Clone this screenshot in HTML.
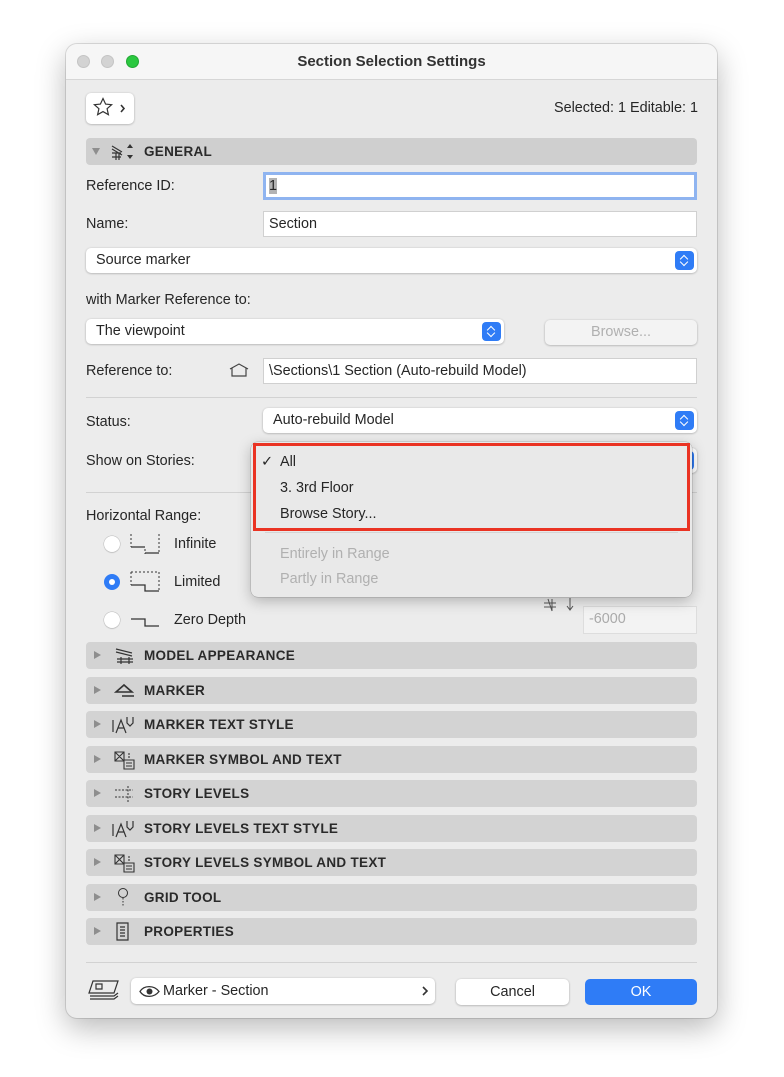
<!DOCTYPE html>
<html><head><meta charset="utf-8"><style>
*{box-sizing:border-box;margin:0;padding:0}
body{width:784px;height:1077px;background:#fff;font-family:"Liberation Sans",sans-serif;font-size:14.4px;color:#262626;position:relative;overflow:hidden}
.a{position:absolute}
.win{left:66px;top:44px;width:651px;height:974px;background:#ececec;border-radius:11px;box-shadow:0 10px 30px rgba(0,0,0,.28),0 0 0 1px rgba(0,0,0,.12);overflow:hidden}
.tb{left:0;top:0;width:651px;height:36px;background:#f6f6f6;border-bottom:1px solid #d6d6d6;text-align:center;line-height:35px;font-weight:bold;font-size:15px;color:#333}
.dot{width:13px;height:13px;border-radius:50%;top:11px;background:#d3d3d3;border:1px solid #c4c4c4}
.lbl{line-height:16px}
.fld{background:#fff;border:1px solid #d0d0d0;height:26px;line-height:24px;padding-left:5px}
.pop{background:#fff;border-radius:5px;box-shadow:0 0.5px 2px rgba(0,0,0,.3);height:25px;line-height:25px;padding-left:10px}
.stp{position:absolute;right:3px;top:3px;width:19px;height:19px;border-radius:4px;background:#2f7cf6}
.stp:before,.stp:after{content:"";position:absolute;left:6px;width:5px;height:5px;border-left:1.5px solid #fff;border-top:1.5px solid #fff}
.stp:before{top:5px;transform:rotate(45deg)}
.stp:after{top:8px;transform:rotate(225deg)}
.sec{left:20px;width:611px;height:27px;background:#d3d3d3;border-radius:4px;font-weight:bold;font-size:13.5px;letter-spacing:.3px;line-height:27px;padding-left:58px;color:#2a2a2a}
.sec:before{content:"";position:absolute;left:8px;top:9px;border-left:7px solid #8e8e8e;border-top:4.5px solid transparent;border-bottom:4.5px solid transparent}
.sec.g:before{display:none}
.ic{position:absolute;left:27px;top:5px}
.sep{left:20px;width:611px;height:1px;background:#d2d2d2}
.rad{width:16px;height:16px;border-radius:50%;background:#fff;box-shadow:0 0 0 .5px #bbb,0 1px 1px rgba(0,0,0,.15)}
.menu{left:185px;top:398px;width:441px;height:155px;background:#e9e9e9;border-radius:7px;box-shadow:0 4px 14px rgba(0,0,0,.25),0 0 0 .5px rgba(0,0,0,.2)}
.mi{position:absolute;left:29px;font-size:14.4px}
.btn{background:#fff;border-radius:5px;box-shadow:0 0.5px 2px rgba(0,0,0,.3);height:26px;line-height:26px;text-align:center;font-size:14.4px}
</style></head><body>
<div class="a win">
 <div class="a tb">Section Selection Settings</div>
 <div class="a dot" style="left:11px"></div>
 <div class="a dot" style="left:35px"></div>
 <div class="a dot" style="left:60px;background:#2bc840;border-color:#22a834"></div>

 <div class="a btn" style="left:20px;top:49px;width:48px;height:31px"><svg width="48" height="31"><path d="M17 5.5l2.6 5.6 6 .6-4.5 4 1.3 6-5.4-3.1-5.4 3.1 1.3-6-4.5-4 6-.6z" fill="none" stroke="#333" stroke-width="1.2"/><path d="M35 12l3 3.5-3 3.5" fill="none" stroke="#333" stroke-width="1.6"/></svg></div>
 <div class="a" style="right:19px;top:56px">Selected: 1 Editable: 1</div>

 <div class="a sec g" style="top:94px;background:#cfcfcf">GENERAL<svg class="ic" width="26" height="18" style="left:24px"><path d="M2 3l10 6M2 6l10 6M2 10h9M2 14h9M6 10v7M9 10v7" stroke="#333" stroke-width="1.2" fill="none"/><path d="M17 5l3-4 3 4zM17 12l3 4 3-4z" fill="#333"/></svg></div>
 <div class="a" style="left:26px;top:104px;width:0;height:0;border-top:7px solid #8e8e8e;border-left:4.5px solid transparent;border-right:4.5px solid transparent"></div>

 <div class="a lbl" style="left:20px;top:134px">Reference ID:</div>
 <div class="a fld" style="left:197px;top:128px;width:434px;height:28px;border:3px solid #8fb4f0;line-height:22px;padding-left:3px"><span style="background:#b3b3b3">1</span></div>
 <div class="a lbl" style="left:20px;top:172px">Name:</div>
 <div class="a fld" style="left:197px;top:167px;width:434px">Section</div>
 <div class="a pop" style="left:20px;top:204px;width:611px">Source marker<span class="stp"></span></div>
 <div class="a lbl" style="left:20px;top:248px">with Marker Reference to:</div>
 <div class="a pop" style="left:20px;top:275px;width:418px">The viewpoint<span class="stp"></span></div>
 <div class="a btn" style="left:479px;top:276px;width:152px;height:25px;line-height:25px;color:#b0b0b0;background:#f3f3f3">Browse...</div>
 <div class="a lbl" style="left:20px;top:319px">Reference to:</div>
 <svg class="a" style="left:162px;top:318px" width="22" height="16"><path d="M2 7l9-5 9 5M4 6v8h14V6" fill="none" stroke="#444" stroke-width="1.2"/></svg>
 <div class="a fld" style="left:197px;top:314px;width:434px">\Sections\1 Section (Auto-rebuild Model)</div>
 <div class="a sep" style="top:353px"></div>
 <div class="a lbl" style="left:20px;top:370px">Status:</div>
 <div class="a pop" style="left:197px;top:364px;width:434px">Auto-rebuild Model<span class="stp"></span></div>
 <div class="a lbl" style="left:20px;top:409px">Show on Stories:</div>
 <div class="a pop" style="left:197px;top:404px;width:434px"><span class="stp"></span></div>
 <div class="a sep" style="top:448px"></div>
 <div class="a lbl" style="left:20px;top:464px">Horizontal Range:</div>

 <div class="a rad" style="left:38px;top:492px"></div>
 <div class="a rad" style="left:38px;top:530px;background:#2f7cf6;box-shadow:none"><div style="position:absolute;left:5px;top:5px;width:6px;height:6px;border-radius:50%;background:#fff"></div></div>
 <div class="a rad" style="left:38px;top:568px"></div>
 <svg class="a" style="left:62px;top:488px" width="34" height="24"><path d="M3 2v13M3 15h14v7M31 2v20" stroke="#333" stroke-dasharray="2 2" fill="none"/><path d="M3 15h14M17 21h14" stroke="#333" stroke-width="1.3"/></svg>
 <svg class="a" style="left:62px;top:526px" width="34" height="24"><path d="M3 2h28v20M3 2v13" stroke="#333" stroke-dasharray="2 2" fill="none"/><path d="M3 15h14v6h14" stroke="#333" stroke-width="1.3" fill="none"/></svg>
 <svg class="a" style="left:62px;top:566px" width="34" height="20"><path d="M3 9h14v7h14" stroke="#333" stroke-width="1.3" fill="none"/></svg>
 <div class="a lbl" style="left:108px;top:492px">Infinite</div>
 <div class="a lbl" style="left:108px;top:530px">Limited</div>
 <div class="a lbl" style="left:108px;top:568px">Zero Depth</div>
 <svg class="a" style="left:476px;top:551px" width="36" height="18"><path d="M2 8h12M2 12h12M6 4l4 12M10 4v12M28 3v11M25 11l3 4 3-4" stroke="#555" fill="none"/></svg>
 <div class="a fld" style="left:517px;top:562px;width:114px;height:28px;color:#aaa;background:#f3f3f3;border-color:#ddd">-6000</div>

 <div class="a sec" style="top:598px">MODEL APPEARANCE<svg class="ic" width="22" height="18"><path d="M3 2l16 4M3 5l16 4M4 12h16M4 15h16M8 10v7M16 10v7" stroke="#333" stroke-width="1.2" fill="none"/></svg></div>
 <div class="a sec" style="top:633px">MARKER<svg class="ic" width="22" height="18"><path d="M3 10l8-7 8 7zM9 14h12" stroke="#333" stroke-width="1.6" fill="none"/></svg></div>
 <div class="a sec" style="top:667px">MARKER TEXT STYLE<svg class="ic" width="24" height="18" style="left:25px"><path d="M2 4v12M5 17l5-13 5 13M7 12h6M16 1v6l3 3 3-3V1" stroke="#333" stroke-width="1.2" fill="none"/></svg></div>
 <div class="a sec" style="top:702px">MARKER SYMBOL AND TEXT<svg class="ic" width="24" height="19"><path d="M2 1h9v9H2zM2 1l9 9M11 1l-9 9M11 9h10v9H11zM13 12h6M13 15h6M16 2v2M16 5v2" stroke="#333" stroke-width="1.1" fill="none"/></svg></div>
 <div class="a sec" style="top:736px">STORY LEVELS<svg class="ic" width="24" height="18"><path d="M2 5h18M2 12h18M15 1v16" stroke="#333" stroke-dasharray="2 1.5" fill="none"/></svg></div>
 <div class="a sec" style="top:771px">STORY LEVELS TEXT STYLE<svg class="ic" width="24" height="18" style="left:25px"><path d="M2 4v12M5 17l5-13 5 13M7 12h6M16 1v6l3 3 3-3V1" stroke="#333" stroke-width="1.2" fill="none"/></svg></div>
 <div class="a sec" style="top:805px">STORY LEVELS SYMBOL AND TEXT<svg class="ic" width="24" height="19"><path d="M2 1h9v9H2zM2 1l9 9M11 1l-9 9M11 9h10v9H11zM13 12h6M13 15h6M16 2v2M16 5v2" stroke="#333" stroke-width="1.1" fill="none"/></svg></div>
 <div class="a sec" style="top:840px">GRID TOOL<svg class="ic" width="22" height="19" style="top:3px"><circle cx="10" cy="6" r="4.5" stroke="#333" fill="none"/><path d="M10 11v8" stroke="#333" stroke-dasharray="1.5 1.5"/></svg></div>
 <div class="a sec" style="top:874px">PROPERTIES<svg class="ic" width="22" height="19" style="top:4px"><path d="M4 1h11v17H4zM7 5h5M7 8h5M7 11h5M7 14h5" stroke="#333" stroke-width="1.2" fill="none"/></svg></div>

 <div class="a sep" style="top:918px"></div>
 <svg class="a" style="left:20px;top:934px" width="36" height="24"><path d="M7 3h25l-4 12H3zM4 18h24l4-3M4 21h24l4-3M10 6h6v5h-6z" stroke="#333" stroke-width="1.2" fill="none"/></svg>
 <div class="a btn" style="left:65px;top:934px;width:304px;text-align:left;padding-left:32px">Marker - Section<svg class="a" style="left:8px;top:7px" width="22" height="13"><path d="M1 6.5C5 0 15 0 20 6.5 15 13 5 13 1 6.5z" stroke="#333" stroke-width="1.3" fill="none"/><circle cx="10.5" cy="6.5" r="3" fill="#333"/></svg><svg class="a" style="right:6px;top:8px" width="8" height="10"><path d="M2 1l4 4-4 4" stroke="#333" stroke-width="1.6" fill="none"/></svg></div>
 <div class="a btn" style="left:390px;top:935px;width:113px">Cancel</div>
 <div class="a btn" style="left:519px;top:935px;width:112px;background:#2f7cf6;color:#fff;box-shadow:none">OK</div>

 <div class="a menu">
  <div class="mi" style="left:10px;top:12px">&#10003;</div>
  <div class="mi" style="top:12px">All</div>
  <div class="mi" style="top:38px">3. 3rd Floor</div>
  <div class="mi" style="top:64px">Browse Story...</div>
  <div class="a" style="left:14px;top:90px;width:413px;height:1px;background:#d4d4d4"></div>
  <div class="mi" style="top:104px;color:#b0b0b0">Entirely in Range</div>
  <div class="mi" style="top:129px;color:#b0b0b0">Partly in Range</div>
 </div>
 <div class="a" style="left:187px;top:399px;width:437px;height:88px;border:3px solid #ea3323"></div>
</div>
</body></html>
